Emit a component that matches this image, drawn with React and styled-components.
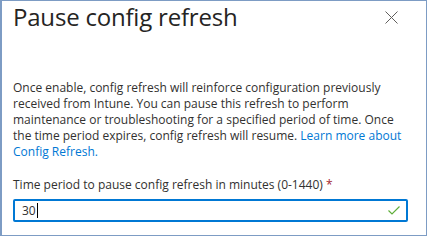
import React from 'react';
import styled, { createGlobalStyle } from 'styled-components';

const GlobalStyle = createGlobalStyle`
  body {
    margin: 0;
    background: #fff;
    font-family: 'Open Sans', 'Noto Sans', sans-serif;
  }
`;

const App = () => (
  <>
    <GlobalStyle />
    <Panel>
      <Header>
        <Title>Pause config refresh</Title>
        <CloseButton aria-label="Close">
          <svg width="13" height="13" viewBox="0 0 13 13">
            <path d="M0.5 0.5 L12.5 12.5 M12.5 0.5 L0.5 12.5" stroke="#605e5c" strokeWidth="1" fill="none" />
          </svg>
        </CloseButton>
      </Header>

      <Description>
        Once enable, config refresh will reinforce configuration previously
        received from Intune. You can pause this refresh to perform
        maintenance or troubleshooting for a specified period of time. Once
        the time period expires, config refresh will resume.{' '}
        <LearnLink href="#">Learn more about Config Refresh.</LearnLink>
      </Description>

      <Field>
        <Label>
          Time period to pause config refresh in minutes (0-1440) <Required>*</Required>
        </Label>
        <InputBox>
          <Value>30</Value>
          <Caret />
          <Check>
            <svg width="12" height="9" viewBox="0 0 12 9">
              <path d="M0.5 4.5 L4 8 L11.5 0.5" stroke="#5fae3a" strokeWidth="1.2" fill="none" />
            </svg>
          </Check>
        </InputBox>
      </Field>
    </Panel>
  </>
);

export default App;

// Styled Components

const Panel = styled.div`
  box-sizing: border-box;
  width: 427px;
  height: 236px;
  border: 1px solid #7d9cc4;
  border-left-width: 2px;
  padding: 0 19px 0 11px;
  color: #323130;
`;

const Header = styled.div`
  display: flex;
  justify-content: space-between;
  align-items: flex-start;
  height: 34px;
`;

const Title = styled.h1`
  margin: 0;
  font-size: 24px;
  font-weight: 400;
  line-height: 32px;
  letter-spacing: -0.2px;
  color: #252423;
`;

const CloseButton = styled.button`
  border: none;
  background: transparent;
  padding: 0;
  margin: 10px 9px 0 0;
  line-height: 0;
  cursor: pointer;
`;

const Description = styled.p`
  margin: 45px 0 0;
  font-size: 12px;
  line-height: 16px;
  color: #323130;
`;

const LearnLink = styled.a`
  color: #0078d4;
  text-decoration: none;
`;

const Field = styled.div`
  margin-top: 17px;
  display: flex;
  flex-direction: column;
  gap: 6px;
`;

const Label = styled.label`
  font-size: 12px;
  line-height: 16px;
  color: #323130;
`;

const Required = styled.span`
  color: #a4262c;
`;

const InputBox = styled.div`
  box-sizing: border-box;
  display: flex;
  align-items: center;
  height: 23px;
  width: 395px;
  border: 2px solid #0078d4;
  border-radius: 2px;
  padding: 0 6px 0 7px;
`;

const Value = styled.span`
  font-size: 12px;
  color: #323130;
`;

const Caret = styled.span`
  width: 1px;
  height: 15px;
  background: #000;
  margin-left: 1px;
`;

const Check = styled.span`
  margin-left: auto;
  line-height: 0;
`;
